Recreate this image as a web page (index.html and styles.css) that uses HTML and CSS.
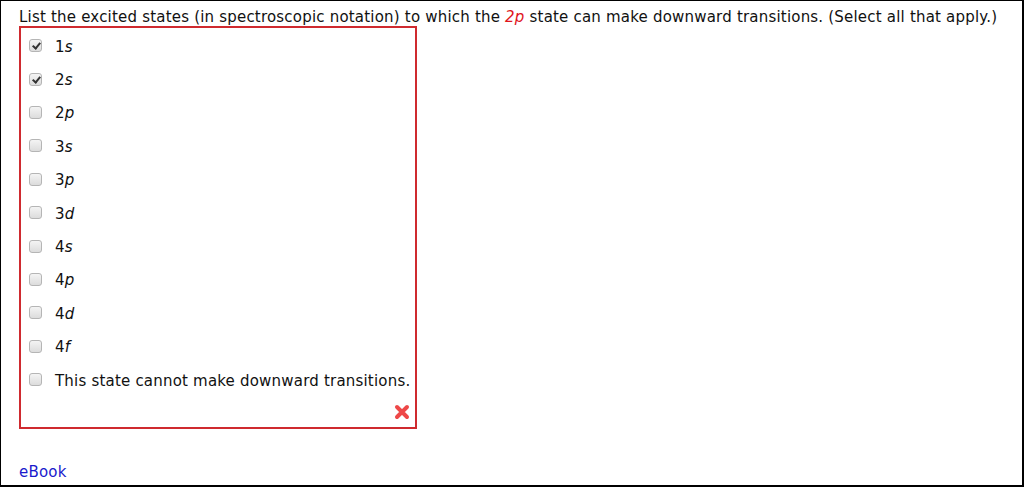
FILE: index.html
```html
<!DOCTYPE html>
<html>
<head>
<meta http-equiv="Content-Type" content="text/html; charset=utf-8"/>
<title>Question</title>
<link rel="stylesheet" href="styles.css">
</head>
<body>
<div class="frame">
  <p class="prompt">List the excited states (in spectroscopic notation) to which the <span class="hl"><i>2p</i></span> state can make downward transitions. (Select all that apply.)</p>

  <div class="answer">
    <label class="opt"><span class="box checked"></span><span>1<i>s</i></span></label>
    <label class="opt"><span class="box checked"></span><span>2<i>s</i></span></label>
    <label class="opt"><span class="box"></span><span>2<i>p</i></span></label>
    <label class="opt"><span class="box"></span><span>3<i>s</i></span></label>
    <label class="opt"><span class="box"></span><span>3<i>p</i></span></label>
    <label class="opt"><span class="box"></span><span>3<i>d</i></span></label>
    <label class="opt"><span class="box"></span><span>4<i>s</i></span></label>
    <label class="opt"><span class="box"></span><span>4<i>p</i></span></label>
    <label class="opt"><span class="box"></span><span>4<i>d</i></span></label>
    <label class="opt"><span class="box"></span><span>4<i>f</i></span></label>
    <label class="opt"><span class="box"></span><span>This state cannot make downward transitions.</span></label>
    <div class="mark">
      <svg width="16" height="16" viewBox="0 0 16 16">
        <path d="M3 3 L13 13 M13 3 L3 13" stroke="#ee4848" stroke-width="4" stroke-linecap="round"/>
      </svg>
    </div>
  </div>

  <a class="ebook" href="#">eBook</a>
</div>
</body>
</html>
```

FILE: styles.css
```css
html, body {
  margin: 0;
  padding: 0;
  background: white;
}

body {
  font-family: "DejaVu Sans", Verdana, sans-serif;
  font-size: 15px;
  letter-spacing: 0.2px;
  color: #111;
}

.frame {
  width: 1024px;
  height: 487px;
  box-sizing: border-box;
  border-style: solid;
  border-color: #000;
  border-width: 1px 2px 2px 1px;
  padding: 7px 0 0 18px;
  display: flex;
  flex-direction: column;
  align-items: flex-start;
}

.prompt {
  margin: 0;
  height: 18px;
  line-height: 18px;
  white-space: nowrap;
}

.hl {
  color: #e0161d;
}

.answer {
  margin-top: 0;
  width: 398px;
  box-sizing: border-box;
  border: 2px solid #cf2a2f;
  padding: 2px 0 0 8px;
  display: flex;
  flex-direction: column;
}

.opt {
  display: flex;
  align-items: center;
  height: 33.4px;
  gap: 13px;
}

.box {
  width: 11px;
  height: 11px;
  border: 1px solid #b5b5b5;
  border-radius: 3px;
  background: linear-gradient(#f4f4f4, #dcdcdc);
  position: relative;
  top: -1px;
}

.box.checked::after {
  content: "";
  position: absolute;
  left: 4px;
  top: 1px;
  width: 3px;
  height: 6px;
  border: solid #333;
  border-width: 0 2px 2px 0;
  transform: rotate(40deg);
}

.mark {
  display: flex;
  justify-content: flex-end;
  padding: 7px 5px 7px 0;
}

.ebook {
  margin-top: 34px;
  color: #1a1acc;
  text-decoration: none;
  line-height: 18px;
}
```
